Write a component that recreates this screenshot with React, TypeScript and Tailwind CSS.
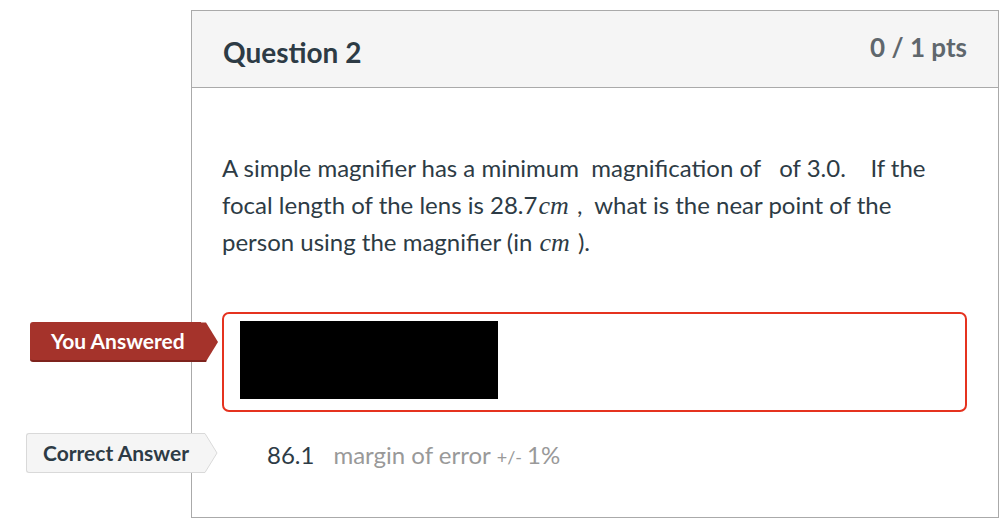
const FONT = { fontFamily: "Lato, 'Open Sans', sans-serif" };

function Tag({ label, tone }: { label: string; tone: "wrong" | "right" }) {
  const wrong = tone === "wrong";
  const fill = wrong ? "#a5332b" : "#f5f5f5";
  const edge = wrong ? "#7e231d" : "#d9d9d9";
  return (
    <div className="flex h-[40px]">
      <div
        className={
          wrong
            ? "flex items-center pl-[21px] pr-[16px] bg-[#a5332b] border-b-2 border-[#7e231d] rounded-l-[3px] text-white font-bold text-[21px]"
            : "flex items-center pl-[16px] pr-[11px] bg-[#f5f5f5] border border-r-0 border-[#d9d9d9] rounded-l-[3px] text-[#2d3b45] font-bold text-[21px]"
        }
      >
        {label}
      </div>
      <svg width="18" height="40" viewBox="0 0 18 40" className="block">
        <path d="M0 0.5 L5 0.5 L17 20 L5 39.5 L0 39.5 Z" fill={fill} />
        <path d="M0 0.5 L5 0.5 L17 20 L5 39.5 L0 39.5" fill="none" stroke={edge} strokeWidth={wrong ? 0 : 1} />
        {wrong && <path d="M0 39 L5.3 39" stroke={edge} strokeWidth="2" />}
      </svg>
    </div>
  );
}

function Cm() {
  return (
    <span className="italic text-[26px] ml-[1px] mr-[2px]" style={{ fontFamily: "'Liberation Serif', serif" }}>
      cm
    </span>
  );
}

export default function App() {
  return (
    <div className="bg-white w-[1000px] h-[518px] pt-[10px] text-[#2d3b45]" style={FONT}>
      <div className="ml-[191px] w-[808px] h-[507px] border border-[#aaaaaa] border-b-0 flex flex-col">
        {/* Header */}
        <div className="h-[77px] bg-[#f5f5f5] border-b border-[#aaaaaa] flex justify-between items-start px-[31px] pt-[24px]">
          <h2 className="font-bold text-[28px] leading-[34px] text-[#2d3b45]">Question 2</h2>
          <span className="font-bold text-[26px] leading-[32px] text-[#5f676d] -mt-[4px]">0 / 1 pts</span>
        </div>

        {/* Body */}
        <div className="pl-[30px] pr-[30px] pt-[62px]">
          <p className="text-[24px] leading-[36.5px] text-[#2d3b45] whitespace-pre-wrap">
            {"A simple magnifier has a minimum  magnification of   of 3.0.    If the\nfocal length of the lens is 28.7"}
            <Cm />
            {" ,  what is the near point of the\nperson using the magnifier (in "}
            <Cm />
            {" )."}
          </p>

          {/* You answered */}
          <div className="relative mt-[50px]">
            <div className="absolute left-[-192px] top-[10px]">
              <Tag label="You Answered" tone="wrong" />
            </div>
            <div className="w-[745px] h-[100px] border-2 border-[#e5321f] rounded-[7px] pl-[16px] pt-[7px]">
              <div className="w-[258px] h-[78px] bg-black" />
            </div>
          </div>

          {/* Correct answer */}
          <div className="relative mt-[21px] h-[40px] flex items-center">
            <div className="absolute left-[-196px] top-0">
              <Tag label="Correct Answer" tone="right" />
            </div>
            <div className="pl-[45px] pt-[4px] flex items-baseline text-[24px]">
              <span className="text-[#2d3b45]">86.1</span>
              <span className="ml-[19px] text-[#999999]">margin of error</span>
              <span className="ml-[6px] text-[18px] text-[#999999]">+/-</span>
              <span className="ml-[5px] text-[#999999]">1%</span>
            </div>
          </div>
        </div>
      </div>
      <div className="ml-[191px] w-[808px] h-px bg-[#aaaaaa]" />
    </div>
  );
}
